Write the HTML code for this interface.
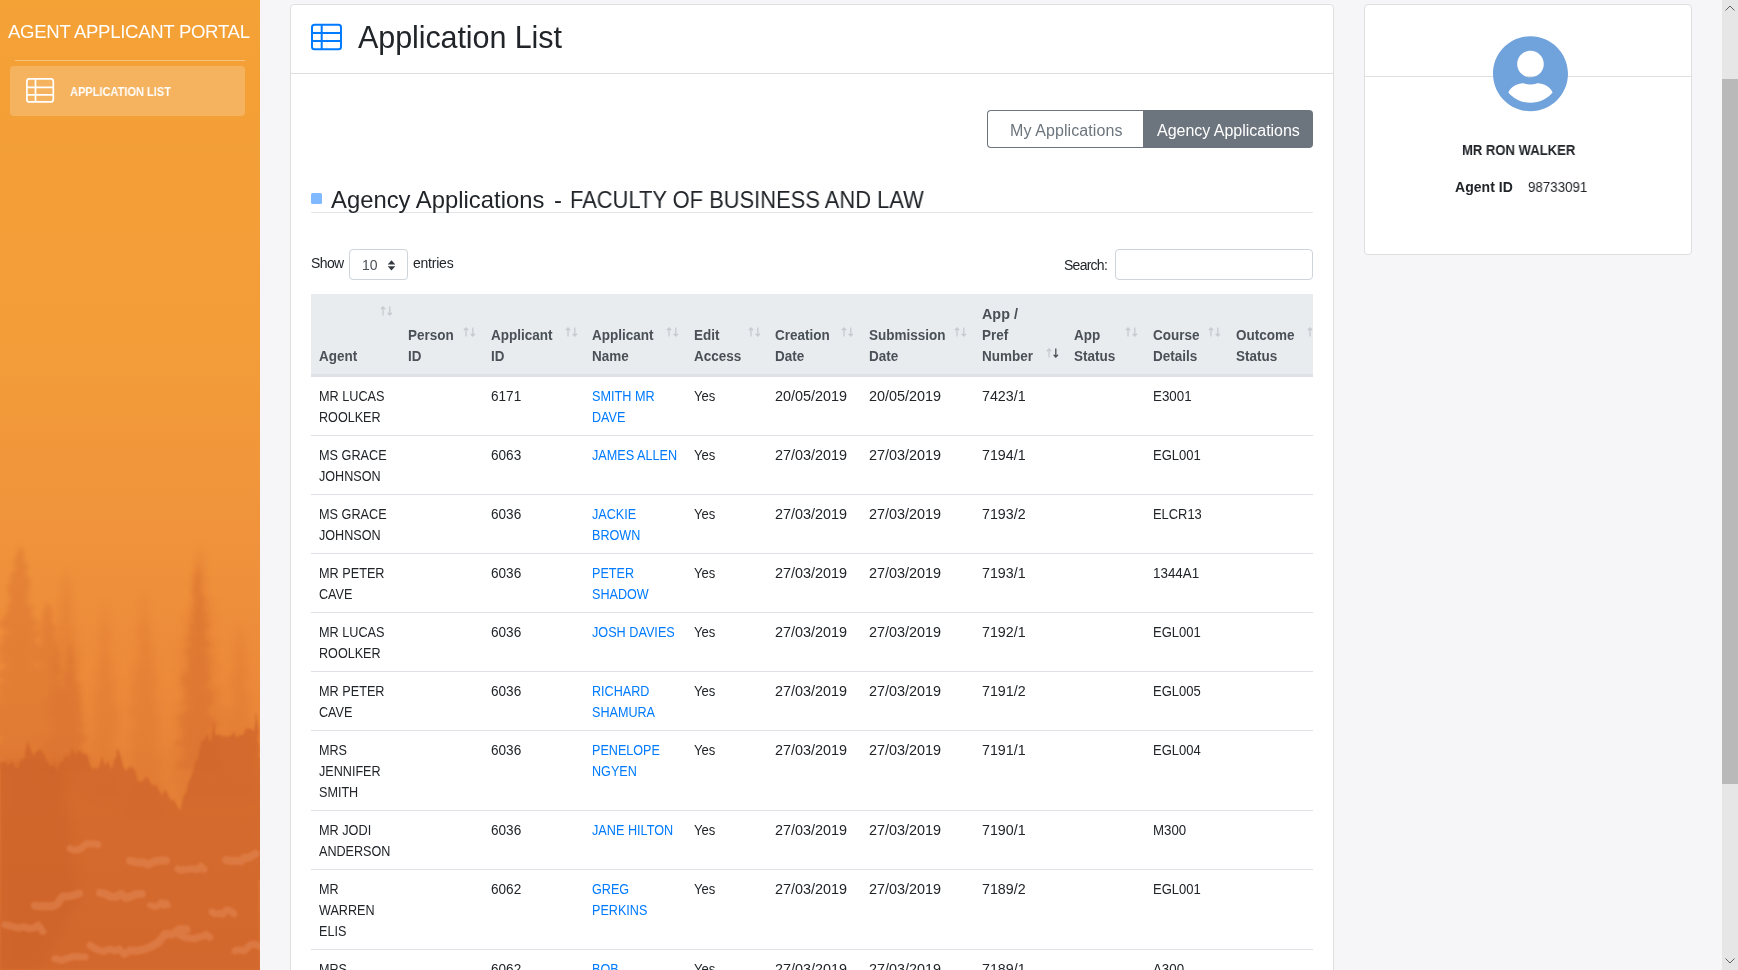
<!DOCTYPE html>
<html><head><meta charset="utf-8">
<style>
html,body{margin:0;padding:0;width:1738px;height:970px;overflow:hidden;background:#f6f6f8;}
body{position:relative;font-family:"Liberation Sans",sans-serif;color:#212529;}
.abs,.x{position:absolute;}
.x{white-space:nowrap;will-change:transform;}
#side{position:absolute;left:0;top:0;width:260px;height:970px;overflow:hidden;}
#side .hr{position:absolute;left:15px;top:60px;width:230px;height:1px;background:rgba(255,255,255,0.35);}
#side .item{position:absolute;left:10px;top:66px;width:235px;height:50px;border-radius:4px;background:rgba(255,255,255,0.2);}
#side .item svg{position:absolute;left:16px;top:12px;}
#card{position:absolute;left:290px;top:4px;width:1042px;height:1000px;background:#fff;border:1px solid #dfdfdf;border-radius:4px;}
#card .hd{position:absolute;left:0;top:0;width:1042px;height:68px;border-bottom:1px solid #dfdfdf;}
.btn1{position:absolute;left:987px;top:110px;width:155px;height:36px;border:1px solid #6c757d;border-right:none;border-radius:4px 0 0 4px;background:#fff;}
.btn2{position:absolute;left:1143px;top:110px;width:170px;height:38px;border-radius:0 4px 4px 0;background:#6c757d;}
.sq{position:absolute;left:311px;top:193px;width:11px;height:11px;background:#80b9ff;border-radius:1.5px;}
.secline{position:absolute;left:311px;top:212px;width:1002px;height:1px;background:#e3e5e8;}
.sel{position:absolute;left:349px;top:249px;width:57px;height:29px;border:1px solid #ced4da;border-radius:4px;background:#fff;}
.inp{position:absolute;left:1115px;top:249px;width:196px;height:29px;border:1px solid #ced4da;border-radius:4px;background:#fff;}
.thbg{position:absolute;left:311px;top:294px;width:1002px;height:80px;background:#e9ecef;}
.thb{position:absolute;left:311px;top:374px;width:1002px;height:3px;background:#dee2e6;}
.rb{position:absolute;left:311px;width:1002px;height:1px;background:#dee2e6;}
#rcard{position:absolute;left:1364px;top:4px;width:326px;height:249px;background:#fff;border:1px solid #dfdfdf;border-radius:4px;}
#rcard .hline{position:absolute;left:0;top:71px;width:326px;height:1px;background:#dfdfdf;}
#sb{position:absolute;left:1722px;top:0;width:16px;height:970px;background:#e6e6e6;}
#sb .thumb{position:absolute;left:0;top:79px;width:16px;height:705px;background:#b9b9b9;}
</style></head>
<body>
<div id="side">
<svg width="260" height="970" viewBox="0 0 260 970" style="position:absolute;left:0;top:0">
<defs><linearGradient id="sg" x1="0" y1="0" x2="0" y2="1"><stop offset="0" stop-color="#f4a136"/><stop offset="0.35" stop-color="#f39d39"/><stop offset="0.55" stop-color="#f0933c"/><stop offset="0.72" stop-color="#eb893a"/><stop offset="0.85" stop-color="#e47f38"/><stop offset="1" stop-color="#dd7636"/></linearGradient><filter id="b4" x="-30%" y="-30%" width="160%" height="160%"><feGaussianBlur stdDeviation="5"/></filter><filter id="b3" x="-30%" y="-30%" width="160%" height="160%"><feGaussianBlur stdDeviation="2.5"/></filter><filter id="b2" x="-30%" y="-30%" width="160%" height="160%"><feGaussianBlur stdDeviation="1.3"/></filter><filter id="b1" x="-30%" y="-30%" width="160%" height="160%"><feGaussianBlur stdDeviation="0.9"/></filter></defs>
<rect width="260" height="970" fill="url(#sg)"/>
<g fill="#d9712f" opacity="0.35" filter="url(#b4)"><path d="M200.0 546.0 L200.0 546.0 L201.1 550.0 L202.1 554.1 L202.7 558.1 L204.4 562.1 L203.3 566.2 L206.1 570.2 L203.0 574.2 L208.6 578.3 L207.3 582.3 L203.8 586.3 L204.4 590.3 L206.2 594.4 L208.5 598.4 L212.4 602.4 L211.2 606.5 L212.0 610.5 L208.5 614.5 L216.8 618.6 L214.3 622.6 L209.1 626.6 L207.5 630.7 L212.1 634.7 L212.3 638.7 L219.1 642.8 L210.6 646.8 L214.8 650.8 L214.2 654.9 L218.2 658.9 L213.0 662.9 L214.3 667.0 L222.0 671.0 L213.6 675.0 L210.6 679.0 L213.0 683.1 L218.4 687.1 L224.3 691.1 L223.1 695.2 L219.1 699.2 L216.4 703.2 L227.9 707.3 L230.2 711.3 L220.1 715.3 L226.0 719.4 L234.3 723.4 L218.1 727.4 L220.1 731.5 L214.4 735.5 L226.9 739.5 L227.8 743.6 L224.6 747.6 L225.8 751.6 L236.0 755.7 L218.0 759.7 L235.8 763.7 L219.5 767.7 L240.2 771.8 L241.1 775.8 L231.9 779.8 L218.1 783.9 L243.2 787.9 L236.2 791.9 L240.2 796.0 L224.8 800.0 L200.0 800.0 L166.1 800.0 L176.6 796.0 L177.4 791.9 L183.5 787.9 L172.8 783.9 L160.3 779.8 L179.8 775.8 L165.3 771.8 L178.9 767.7 L161.8 763.7 L181.3 759.7 L171.5 755.7 L162.2 751.6 L177.4 747.6 L181.0 743.6 L185.0 739.5 L180.3 735.5 L169.5 731.5 L182.9 727.4 L185.7 723.4 L169.3 719.4 L183.9 715.3 L182.2 711.3 L168.6 707.3 L184.7 703.2 L187.0 699.2 L187.0 695.2 L186.1 691.1 L179.5 687.1 L175.6 683.1 L188.7 679.0 L188.6 675.0 L174.5 671.0 L189.7 667.0 L178.8 662.9 L190.5 658.9 L176.9 654.9 L178.7 650.8 L192.4 646.8 L179.3 642.8 L181.5 638.7 L183.2 634.7 L189.8 630.7 L189.8 626.6 L184.2 622.6 L183.1 618.6 L189.6 614.5 L189.6 610.5 L190.0 606.5 L191.2 602.4 L195.2 598.4 L194.2 594.4 L192.1 590.3 L195.2 586.3 L192.5 582.3 L191.3 578.3 L193.7 574.2 L197.1 570.2 L197.5 566.2 L196.2 562.1 L198.1 558.1 L198.0 554.1 L198.4 550.0 L200.0 546.0Z"/><path d="M144.0 590.0 L144.0 590.0 L144.6 594.0 L145.9 598.1 L145.5 602.1 L145.7 606.1 L146.2 610.2 L145.9 614.2 L147.3 618.2 L146.7 622.3 L150.3 626.3 L149.8 630.4 L149.8 634.4 L147.2 638.4 L152.6 642.5 L153.5 646.5 L151.8 650.5 L152.9 654.6 L155.4 658.6 L152.4 662.6 L155.6 666.7 L154.4 670.7 L156.7 674.7 L155.1 678.8 L157.3 682.8 L156.9 686.8 L155.2 690.9 L153.5 694.9 L156.3 698.9 L156.9 703.0 L160.0 707.0 L154.8 711.1 L157.3 715.1 L160.9 719.1 L160.2 723.2 L158.6 727.2 L154.1 731.2 L157.9 735.3 L164.1 739.3 L151.7 743.3 L161.4 747.4 L154.3 751.4 L161.9 755.4 L165.8 759.5 L162.7 763.5 L159.3 767.5 L167.4 771.6 L159.1 775.6 L158.2 779.6 L161.5 783.7 L167.9 787.7 L170.0 791.8 L156.5 795.8 L158.6 799.8 L161.4 803.9 L163.2 807.9 L170.0 811.9 L163.0 816.0 L155.0 820.0 L144.0 820.0 L132.1 820.0 L114.9 816.0 L127.9 811.9 L122.4 807.9 L130.2 803.9 L126.2 799.8 L129.5 795.8 L122.1 791.8 L120.3 787.7 L132.6 783.7 L125.3 779.6 L120.8 775.6 L122.4 771.6 L132.4 767.5 L130.6 763.5 L129.1 759.5 L122.4 755.4 L133.2 751.4 L132.0 747.4 L132.9 743.3 L128.2 739.3 L127.4 735.3 L130.6 731.2 L136.7 727.2 L136.2 723.2 L132.0 719.1 L128.8 715.1 L129.3 711.1 L126.7 707.0 L137.2 703.0 L132.0 698.9 L131.9 694.9 L129.9 690.9 L134.7 686.8 L130.5 682.8 L135.9 678.8 L132.4 674.7 L133.3 670.7 L133.7 666.7 L139.3 662.6 L137.7 658.6 L136.8 654.6 L140.3 650.5 L136.2 646.5 L140.7 642.5 L140.2 638.4 L137.6 634.4 L136.7 630.4 L140.0 626.3 L139.5 622.3 L141.4 618.2 L140.8 614.2 L142.5 610.2 L140.6 606.1 L141.9 602.1 L142.5 598.1 L143.5 594.0 L144.0 590.0Z"/><path d="M105.0 600.0 L105.0 600.0 L105.7 604.0 L106.5 608.0 L106.1 612.0 L106.1 616.0 L106.8 620.0 L106.6 624.0 L108.0 628.0 L109.1 632.0 L110.7 636.0 L108.0 640.0 L108.2 644.0 L109.8 648.0 L108.6 652.0 L109.8 656.0 L111.0 660.0 L112.8 664.0 L113.4 668.0 L109.1 672.0 L113.7 676.0 L112.1 680.0 L115.8 684.0 L113.6 688.0 L115.7 692.0 L113.3 696.0 L111.4 700.0 L117.0 704.0 L116.5 708.0 L118.5 712.0 L119.7 716.0 L118.2 720.0 L119.8 724.0 L114.3 728.0 L115.5 732.0 L119.3 736.0 L111.3 740.0 L111.9 744.0 L113.3 748.0 L120.9 752.0 L113.4 756.0 L120.8 760.0 L120.6 764.0 L118.4 768.0 L113.2 772.0 L119.4 776.0 L122.4 780.0 L119.8 784.0 L120.6 788.0 L118.3 792.0 L126.2 796.0 L125.8 800.0 L105.0 800.0 L93.9 800.0 L84.7 796.0 L92.7 792.0 L85.3 788.0 L88.6 784.0 L93.6 780.0 L94.8 776.0 L85.3 772.0 L85.7 768.0 L87.4 764.0 L91.8 760.0 L96.7 756.0 L94.5 752.0 L89.3 748.0 L89.5 744.0 L93.5 740.0 L93.1 736.0 L98.4 732.0 L90.4 728.0 L96.3 724.0 L94.3 720.0 L90.3 716.0 L98.0 712.0 L94.2 708.0 L93.8 704.0 L94.8 700.0 L92.7 696.0 L93.6 692.0 L97.9 688.0 L96.3 684.0 L100.2 680.0 L94.9 676.0 L95.5 672.0 L99.1 668.0 L98.1 664.0 L98.0 660.0 L100.6 656.0 L98.6 652.0 L102.4 648.0 L100.5 644.0 L100.0 640.0 L99.9 636.0 L101.0 632.0 L101.4 628.0 L103.1 624.0 L101.8 620.0 L103.0 616.0 L104.1 612.0 L104.0 608.0 L104.2 604.0 L105.0 600.0Z"/><path d="M240.0 620.0 L240.0 620.0 L240.6 624.0 L241.5 628.0 L241.2 632.0 L242.7 636.0 L244.1 640.0 L243.7 644.0 L242.4 648.0 L244.3 652.0 L247.2 656.0 L245.4 660.0 L245.6 664.0 L249.0 668.0 L245.7 672.0 L248.1 676.0 L245.0 680.0 L244.4 684.0 L246.3 688.0 L247.4 692.0 L250.4 696.0 L251.9 700.0 L250.2 704.0 L247.4 708.0 L250.2 712.0 L250.3 716.0 L247.8 720.0 L253.5 724.0 L252.7 728.0 L254.1 732.0 L249.7 736.0 L257.5 740.0 L251.3 744.0 L260.0 748.0 L261.5 752.0 L249.6 756.0 L258.5 760.0 L249.5 764.0 L254.7 768.0 L250.4 772.0 L259.6 776.0 L252.0 780.0 L264.1 784.0 L251.1 788.0 L262.4 792.0 L261.6 796.0 L250.9 800.0 L240.0 800.0 L227.0 800.0 L221.7 796.0 L222.0 792.0 L214.4 788.0 L219.7 784.0 L231.0 780.0 L225.0 776.0 L219.2 772.0 L219.0 768.0 L228.1 764.0 L228.6 760.0 L219.6 756.0 L229.4 752.0 L228.4 748.0 L220.8 744.0 L223.4 740.0 L222.4 736.0 L222.9 732.0 L226.0 728.0 L231.4 724.0 L228.0 720.0 L230.1 716.0 L228.8 712.0 L232.0 708.0 L233.6 704.0 L234.0 700.0 L232.0 696.0 L229.4 692.0 L234.0 688.0 L229.7 684.0 L229.1 680.0 L234.9 676.0 L233.3 672.0 L231.6 668.0 L236.1 664.0 L235.7 660.0 L232.6 656.0 L235.2 652.0 L235.0 648.0 L236.1 644.0 L237.1 640.0 L236.1 636.0 L237.7 632.0 L238.4 628.0 L239.1 624.0 L240.0 620.0Z"/><path d="M66.0 566.0 L66.0 566.0 L66.9 570.0 L67.0 574.0 L67.5 578.0 L69.9 582.0 L67.9 586.0 L71.2 590.0 L71.2 594.0 L70.4 598.0 L70.7 602.0 L68.9 606.0 L73.9 610.0 L72.0 614.0 L72.1 618.0 L70.8 622.0 L70.0 626.0 L76.3 630.0 L77.3 634.0 L73.9 638.0 L75.2 642.0 L78.3 646.0 L79.8 650.0 L79.0 654.0 L75.7 658.0 L81.1 662.0 L80.3 666.0 L76.7 670.0 L73.1 674.0 L78.1 678.0 L77.0 682.0 L80.8 686.0 L85.3 690.0 L77.7 694.0 L81.2 698.0 L79.0 702.0 L83.0 706.0 L85.1 710.0 L74.4 714.0 L85.6 718.0 L80.7 722.0 L77.7 726.0 L76.3 730.0 L90.0 734.0 L83.7 738.0 L85.1 742.0 L86.7 746.0 L76.9 750.0 L89.6 754.0 L93.2 758.0 L85.0 762.0 L85.7 766.0 L77.5 770.0 L84.9 774.0 L88.7 778.0 L82.7 782.0 L88.6 786.0 L92.2 790.0 L66.0 790.0 L48.8 790.0 L41.4 786.0 L47.7 782.0 L44.7 778.0 L36.7 774.0 L43.7 770.0 L52.5 766.0 L52.9 762.0 L55.3 758.0 L45.4 754.0 L41.9 750.0 L39.1 746.0 L40.0 742.0 L47.6 738.0 L52.9 734.0 L51.1 730.0 L56.6 726.0 L53.6 722.0 L48.3 718.0 L43.2 714.0 L47.8 710.0 L43.9 706.0 L51.0 702.0 L49.6 698.0 L49.9 694.0 L56.0 690.0 L51.1 686.0 L59.3 682.0 L55.4 678.0 L51.3 674.0 L51.2 670.0 L52.5 666.0 L50.8 662.0 L52.1 658.0 L53.3 654.0 L58.4 650.0 L52.0 646.0 L56.0 642.0 L56.2 638.0 L56.0 634.0 L55.0 630.0 L58.3 626.0 L61.0 622.0 L57.7 618.0 L61.6 614.0 L58.9 610.0 L60.0 606.0 L60.9 602.0 L62.2 598.0 L62.0 594.0 L63.9 590.0 L61.6 586.0 L62.5 582.0 L64.5 578.0 L64.4 574.0 L65.1 570.0 L66.0 566.0Z"/></g>
<g fill="#d66d2d" opacity="0.42" filter="url(#b3)"><path d="M20.0 543.0 L20.0 543.0 L20.8 547.1 L23.0 551.1 L24.5 555.2 L22.3 559.2 L27.1 563.3 L28.0 567.3 L26.3 571.4 L25.4 575.4 L31.2 579.5 L28.3 583.5 L32.1 587.6 L26.2 591.6 L30.1 595.7 L26.4 599.8 L27.6 603.8 L34.6 607.9 L30.1 611.9 L32.7 616.0 L34.8 620.0 L41.5 624.1 L31.6 628.1 L42.3 632.2 L38.8 636.2 L33.5 640.3 L39.0 644.3 L40.8 648.4 L33.3 652.4 L48.7 656.5 L47.5 660.6 L31.9 664.6 L39.7 668.7 L33.4 672.7 L33.1 676.8 L46.8 680.8 L46.4 684.9 L43.4 688.9 L40.8 693.0 L53.2 697.0 L36.1 701.1 L49.2 705.1 L39.2 709.2 L40.7 713.2 L44.1 717.3 L61.4 721.4 L50.0 725.4 L61.0 729.5 L45.9 733.5 L61.1 737.6 L38.3 741.6 L50.7 745.7 L45.5 749.7 L39.0 753.8 L57.7 757.8 L46.8 761.9 L59.9 765.9 L42.3 770.0 L20.0 770.0 L-6.9 770.0 L-20.9 765.9 L0.3 761.9 L-3.6 757.8 L-20.7 753.8 L-17.3 749.7 L-13.1 745.7 L1.9 741.6 L1.6 737.6 L-7.6 733.5 L-16.1 729.5 L-3.8 725.4 L-12.3 721.4 L-15.9 717.3 L-5.1 713.2 L-13.5 709.2 L-13.8 705.1 L5.0 701.1 L-10.9 697.0 L2.4 693.0 L-1.0 688.9 L-4.6 684.9 L6.3 680.8 L-3.2 676.8 L-4.4 672.7 L3.5 668.7 L8.5 664.6 L-8.2 660.6 L5.2 656.5 L-3.7 652.4 L-0.1 648.4 L-1.1 644.3 L5.0 640.3 L-1.3 636.2 L9.9 632.2 L0.9 628.1 L-2.2 624.1 L1.8 620.0 L5.2 616.0 L7.4 611.9 L8.2 607.9 L7.8 603.8 L12.0 599.8 L8.1 595.7 L9.1 591.6 L6.4 587.6 L9.6 583.5 L11.9 579.5 L9.5 575.4 L14.0 571.4 L16.6 567.3 L12.7 563.3 L14.9 559.2 L17.1 555.2 L18.4 551.1 L19.0 547.1 L20.0 543.0Z"/><path d="M48.0 600.0 L48.0 600.0 L48.8 604.0 L50.5 608.1 L52.5 612.1 L51.8 616.2 L51.9 620.2 L53.0 624.3 L56.7 628.3 L54.1 632.4 L54.7 636.4 L55.5 640.5 L57.6 644.5 L58.1 648.6 L58.9 652.6 L61.7 656.7 L57.1 660.7 L60.4 664.8 L61.6 668.8 L63.3 672.9 L56.1 676.9 L66.6 681.0 L57.0 685.0 L69.8 689.0 L66.4 693.1 L68.8 697.1 L61.1 701.2 L70.6 705.2 L71.2 709.3 L64.1 713.3 L70.9 717.4 L68.9 721.4 L72.8 725.5 L67.4 729.5 L73.2 733.6 L76.8 737.6 L79.3 741.7 L74.5 745.7 L76.6 749.8 L70.5 753.8 L64.3 757.9 L85.4 761.9 L65.5 766.0 L72.4 770.0 L48.0 770.0 L29.2 770.0 L25.3 766.0 L16.7 761.9 L25.1 757.9 L16.6 753.8 L23.6 749.8 L14.4 745.7 L17.9 741.7 L18.1 737.6 L19.4 733.6 L18.3 729.5 L22.9 725.5 L28.0 721.4 L19.5 717.4 L30.9 713.3 L29.1 709.3 L34.9 705.2 L28.1 701.2 L37.0 697.1 L38.3 693.1 L28.7 689.0 L39.0 685.0 L32.8 681.0 L29.9 676.9 L28.6 672.9 L34.7 668.8 L41.5 664.8 L32.2 660.7 L40.5 656.7 L34.3 652.6 L35.5 648.6 L41.6 644.5 L40.5 640.5 L41.3 636.4 L42.7 632.4 L39.1 628.3 L43.4 624.3 L41.8 620.2 L42.4 616.2 L43.5 612.1 L45.2 608.1 L46.8 604.0 L48.0 600.0Z"/><path d="M70.0 640.0 L70.0 640.0 L70.9 644.1 L72.1 648.1 L71.8 652.2 L73.1 656.2 L75.4 660.3 L72.8 664.4 L73.7 668.4 L76.8 672.5 L74.5 676.6 L75.3 680.6 L79.1 684.7 L78.1 688.8 L78.1 692.8 L82.1 696.9 L77.9 700.9 L84.1 705.0 L77.5 709.1 L85.4 713.1 L80.0 717.2 L81.9 721.2 L87.9 725.3 L79.4 729.4 L82.7 733.4 L87.4 737.5 L85.4 741.6 L79.6 745.6 L81.4 749.7 L85.6 753.8 L93.3 757.8 L86.7 761.9 L91.0 765.9 L92.4 770.0 L70.0 770.0 L61.2 770.0 L59.0 765.9 L57.5 761.9 L52.2 757.8 L49.2 753.8 L57.7 749.7 L60.3 745.6 L53.1 741.6 L58.1 737.5 L63.1 733.4 L55.4 729.4 L60.5 725.3 L58.0 721.2 L55.5 717.2 L63.9 713.1 L59.9 709.1 L59.8 705.0 L57.0 700.9 L63.2 696.9 L59.2 692.8 L63.6 688.8 L65.0 684.7 L65.3 680.6 L63.3 676.6 L65.8 672.5 L66.5 668.4 L67.5 664.4 L65.8 660.3 L68.1 656.2 L66.7 652.2 L68.8 648.1 L69.4 644.1 L70.0 640.0Z"/><path d="M198.0 560.0 L198.0 560.0 L198.7 564.0 L198.9 568.1 L200.0 572.1 L200.8 576.2 L200.5 580.2 L201.3 584.2 L200.4 588.3 L201.2 592.3 L203.1 596.3 L205.1 600.4 L202.8 604.4 L203.1 608.5 L206.0 612.5 L206.3 616.5 L204.7 620.6 L209.4 624.6 L207.5 628.7 L205.6 632.7 L204.7 636.7 L207.0 640.8 L212.4 644.8 L205.3 648.8 L206.4 652.9 L209.3 656.9 L207.5 661.0 L211.4 665.0 L206.5 669.0 L208.3 673.1 L211.4 677.1 L208.9 681.2 L206.1 685.2 L206.3 689.2 L214.8 693.3 L211.0 697.3 L214.0 701.3 L209.0 705.4 L207.8 709.4 L207.2 713.5 L212.9 717.5 L216.7 721.5 L219.8 725.6 L212.2 729.6 L207.2 733.7 L219.0 737.7 L221.0 741.7 L218.2 745.8 L213.5 749.8 L219.7 753.8 L214.9 757.9 L223.0 761.9 L220.0 766.0 L223.3 770.0 L198.0 770.0 L184.5 770.0 L171.9 766.0 L178.3 761.9 L186.1 757.9 L182.0 753.8 L188.1 749.8 L176.9 745.8 L171.7 741.7 L182.1 737.7 L182.2 733.7 L182.9 729.6 L177.0 725.6 L181.5 721.5 L175.5 717.5 L183.7 713.5 L187.7 709.4 L188.9 705.4 L178.5 701.3 L188.1 697.3 L181.6 693.3 L189.1 689.2 L180.5 685.2 L182.2 681.2 L179.9 677.1 L183.0 673.1 L188.9 669.0 L187.6 665.0 L189.0 661.0 L188.4 656.9 L186.3 652.9 L184.9 648.8 L192.9 644.8 L188.0 640.8 L187.2 636.7 L193.4 632.7 L187.1 628.7 L190.4 624.6 L193.4 620.6 L191.9 616.5 L191.6 612.5 L194.3 608.5 L193.2 604.4 L194.4 600.4 L192.8 596.3 L192.1 592.3 L192.3 588.3 L193.4 584.2 L193.8 580.2 L194.3 576.2 L196.0 572.1 L196.2 568.1 L197.5 564.0 L198.0 560.0Z"/></g>
<g fill="#cf6429" opacity="0.72" filter="url(#b2)"><path d="M0.0 970.0 L0.0 762.8 L3.0 761.9 L6.0 762.3 L9.0 765.7 L12.0 761.6 L15.0 767.3 L18.0 768.2 L21.0 759.3 L24.0 758.3 L27.0 756.8 L30.0 747.1 L33.0 755.3 L36.0 752.3 L39.0 749.1 L42.0 750.8 L45.0 756.1 L48.0 763.3 L51.0 767.1 L54.0 763.9 L57.0 770.8 L60.0 762.4 L63.0 760.9 L66.0 753.5 L69.0 760.3 L72.0 747.6 L75.0 755.2 L78.0 750.6 L81.0 752.0 L84.0 754.4 L87.0 754.1 L90.0 765.2 L93.0 769.2 L96.0 769.1 L99.0 767.2 L102.0 756.3 L105.0 765.9 L108.0 760.7 L111.0 769.2 L114.0 762.5 L117.0 767.7 L120.0 772.0 L123.0 765.4 L126.0 771.0 L129.0 766.5 L132.0 767.2 L135.0 770.2 L138.0 781.0 L141.0 781.7 L144.0 779.5 L147.0 776.5 L150.0 782.1 L153.0 785.9 L156.0 784.6 L159.0 790.1 L162.0 795.6 L165.0 789.2 L168.0 794.4 L171.0 800.6 L174.0 799.7 L177.0 805.6 L180.0 810.8 L183.0 797.1 L186.0 792.2 L189.0 780.2 L192.0 774.8 L195.0 763.0 L198.0 757.7 L201.0 741.5 L204.0 740.1 L207.0 733.3 L210.0 742.5 L213.0 737.6 L216.0 735.4 L219.0 734.1 L222.0 736.1 L225.0 736.3 L228.0 736.5 L231.0 735.8 L234.0 732.0 L237.0 737.5 L240.0 735.1 L243.0 734.7 L246.0 728.7 L249.0 728.4 L252.0 729.4 L255.0 732.9 L258.0 727.7 L260.0 970.0 Z"/><path d="M118.0 748.0 L118.0 748.0 L119.1 752.0 L120.7 756.0 L121.8 760.0 L122.9 764.0 L123.1 768.0 L121.5 772.0 L124.2 776.0 L121.9 780.0 L125.7 784.0 L124.6 788.0 L124.6 792.0 L131.2 796.0 L129.7 800.0 L127.9 804.0 L126.2 808.0 L130.7 812.0 L125.6 816.0 L126.3 820.0 L137.6 824.0 L128.7 828.0 L130.3 832.0 L139.2 836.0 L132.3 840.0 L135.8 844.0 L127.3 848.0 L132.3 852.0 L143.7 856.0 L136.1 860.0 L118.0 860.0 L90.8 860.0 L100.0 856.0 L93.7 852.0 L108.5 848.0 L103.8 844.0 L97.3 840.0 L109.2 836.0 L106.1 832.0 L110.7 828.0 L103.9 824.0 L101.2 820.0 L100.7 816.0 L103.3 812.0 L103.4 808.0 L103.5 804.0 L103.4 800.0 L112.5 796.0 L110.1 792.0 L111.9 788.0 L109.1 784.0 L111.9 780.0 L112.2 776.0 L114.8 772.0 L114.2 768.0 L113.7 764.0 L113.7 760.0 L116.7 756.0 L116.2 752.0 L118.0 748.0Z"/><path d="M150.0 785.0 L150.0 785.0 L151.4 789.1 L152.3 793.3 L152.4 797.4 L154.2 801.5 L152.6 805.7 L153.0 809.8 L152.7 813.9 L156.5 818.0 L158.1 822.2 L157.7 826.3 L158.2 830.4 L157.0 834.6 L155.8 838.7 L160.0 842.8 L156.1 847.0 L160.8 851.1 L158.5 855.2 L164.0 859.3 L157.9 863.5 L165.7 867.6 L159.0 871.7 L157.2 875.9 L161.7 880.0 L150.0 880.0 L131.8 880.0 L136.4 875.9 L136.6 871.7 L141.0 867.6 L138.4 863.5 L138.2 859.3 L137.5 855.2 L143.1 851.1 L143.8 847.0 L143.2 842.8 L145.3 838.7 L139.5 834.6 L145.6 830.4 L141.4 826.3 L145.2 822.2 L146.7 818.0 L143.5 813.9 L145.2 809.8 L144.6 805.7 L147.9 801.5 L147.9 797.4 L148.8 793.3 L148.6 789.1 L150.0 785.0Z"/><path d="M214.0 722.0 L214.0 722.0 L214.9 726.1 L215.1 730.1 L215.2 734.2 L217.1 738.2 L216.4 742.3 L216.4 746.3 L219.8 750.4 L218.2 754.4 L218.3 758.5 L219.2 762.5 L219.9 766.6 L219.2 770.6 L222.2 774.7 L220.9 778.7 L222.5 782.8 L224.9 786.8 L224.1 790.9 L223.2 794.9 L222.2 799.0 L225.6 803.0 L221.0 807.1 L221.2 811.1 L224.1 815.2 L225.5 819.2 L225.6 823.3 L221.7 827.3 L220.2 831.4 L225.1 835.4 L223.4 839.5 L221.4 843.5 L227.8 847.6 L231.0 851.6 L222.9 855.7 L221.7 859.7 L229.9 863.8 L225.2 867.8 L222.9 871.9 L224.4 875.9 L224.4 880.0 L214.0 880.0 L202.2 880.0 L194.1 875.9 L197.9 871.9 L199.1 867.8 L202.3 863.8 L202.7 859.7 L203.9 855.7 L200.2 851.6 L196.0 847.6 L197.8 843.5 L202.5 839.5 L202.2 835.4 L206.3 831.4 L198.8 827.3 L200.9 823.3 L208.2 819.2 L203.1 815.2 L204.3 811.1 L201.9 807.1 L202.5 803.0 L207.5 799.0 L208.4 794.9 L208.5 790.9 L206.2 786.8 L204.4 782.8 L207.1 778.7 L206.6 774.7 L207.1 770.6 L210.1 766.6 L206.6 762.5 L208.0 758.5 L211.6 754.4 L208.6 750.4 L210.4 746.3 L211.7 742.3 L212.0 738.2 L211.4 734.2 L212.9 730.1 L213.5 726.1 L214.0 722.0Z"/><path d="M238.0 738.0 L238.0 738.0 L238.5 742.1 L239.4 746.1 L241.2 750.2 L240.7 754.2 L242.8 758.3 L241.6 762.3 L240.4 766.4 L244.6 770.5 L242.7 774.5 L243.3 778.6 L241.4 782.6 L246.3 786.7 L243.2 790.7 L245.8 794.8 L245.6 798.9 L245.2 802.9 L250.7 807.0 L243.0 811.0 L248.9 815.1 L246.4 819.1 L251.9 823.2 L252.7 827.3 L247.9 831.3 L248.1 835.4 L246.6 839.4 L246.5 843.5 L246.5 847.5 L247.4 851.6 L248.9 855.7 L258.2 859.7 L257.0 863.8 L250.8 867.8 L255.5 871.9 L249.8 875.9 L248.7 880.0 L238.0 880.0 L229.7 880.0 L224.9 875.9 L229.3 871.9 L227.7 867.8 L221.5 863.8 L225.0 859.7 L225.1 855.7 L228.8 851.6 L224.8 847.5 L227.6 843.5 L222.9 839.4 L222.7 835.4 L227.3 831.3 L226.4 827.3 L225.8 823.2 L232.3 819.1 L229.4 815.1 L227.9 811.0 L230.7 807.0 L226.2 802.9 L232.1 798.9 L232.3 794.8 L229.4 790.7 L228.3 786.7 L234.4 782.6 L233.4 778.6 L234.6 774.5 L234.4 770.5 L232.7 766.4 L235.5 762.3 L233.9 758.3 L236.5 754.2 L236.4 750.2 L236.6 746.1 L236.8 742.1 L238.0 738.0Z"/><path d="M256.0 712.0 L256.0 712.0 L256.8 716.0 L256.9 720.0 L258.1 724.0 L258.4 728.0 L259.1 732.0 L258.2 736.0 L257.8 740.0 L258.7 744.0 L259.7 748.0 L259.5 752.0 L258.4 756.0 L261.0 760.0 L260.0 764.0 L261.4 768.0 L262.5 772.0 L263.0 776.0 L260.0 780.0 L261.0 784.0 L262.0 788.0 L265.3 792.0 L261.7 796.0 L261.4 800.0 L260.1 804.0 L264.4 808.0 L268.0 812.0 L265.8 816.0 L262.3 820.0 L266.4 824.0 L268.5 828.0 L266.7 832.0 L265.0 836.0 L261.7 840.0 L264.5 844.0 L264.2 848.0 L265.7 852.0 L263.4 856.0 L264.4 860.0 L265.7 864.0 L263.7 868.0 L270.2 872.0 L270.5 876.0 L267.1 880.0 L256.0 880.0 L249.3 880.0 L243.2 876.0 L243.1 872.0 L245.2 868.0 L249.1 864.0 L243.0 860.0 L245.3 856.0 L248.8 852.0 L245.6 848.0 L246.9 844.0 L247.1 840.0 L250.1 836.0 L249.0 832.0 L242.7 828.0 L245.4 824.0 L243.8 820.0 L249.2 816.0 L245.4 812.0 L247.1 808.0 L251.7 804.0 L249.7 800.0 L250.8 796.0 L249.9 792.0 L248.1 788.0 L251.5 784.0 L249.0 780.0 L251.6 776.0 L252.5 772.0 L251.2 768.0 L253.3 764.0 L253.0 760.0 L252.8 756.0 L253.8 752.0 L251.4 748.0 L251.5 744.0 L253.4 740.0 L254.6 736.0 L253.3 732.0 L254.4 728.0 L255.0 724.0 L255.2 720.0 L255.1 716.0 L256.0 712.0Z"/><path d="M28.0 740.0 L28.0 740.0 L28.7 744.0 L30.3 748.0 L30.5 752.0 L30.0 756.0 L34.1 760.0 L31.9 764.0 L32.0 768.0 L35.2 772.0 L34.2 776.0 L39.0 780.0 L37.4 784.0 L36.2 788.0 L35.5 792.0 L41.8 796.0 L42.9 800.0 L35.3 804.0 L37.6 808.0 L46.1 812.0 L37.1 816.0 L43.8 820.0 L35.2 824.0 L41.0 828.0 L42.9 832.0 L44.3 836.0 L45.0 840.0 L52.1 844.0 L42.6 848.0 L42.4 852.0 L49.5 856.0 L55.0 860.0 L28.0 860.0 L6.0 860.0 L6.1 856.0 L3.8 852.0 L13.7 848.0 L6.1 844.0 L10.0 840.0 L10.2 836.0 L16.8 832.0 L12.9 828.0 L17.6 824.0 L18.1 820.0 L19.5 816.0 L17.3 812.0 L16.1 808.0 L21.8 804.0 L18.5 800.0 L14.7 796.0 L19.3 792.0 L18.0 788.0 L17.5 784.0 L19.7 780.0 L17.8 776.0 L21.7 772.0 L21.2 768.0 L22.5 764.0 L24.2 760.0 L25.2 756.0 L25.1 752.0 L25.9 748.0 L26.9 744.0 L28.0 740.0Z"/><path d="M70.0 752.0 L70.0 752.0 L71.1 756.0 L71.7 760.0 L73.3 764.0 L72.5 768.0 L73.3 772.0 L74.7 776.0 L73.0 780.0 L73.6 784.0 L74.0 788.0 L78.8 792.0 L75.1 796.0 L81.0 800.0 L76.6 804.0 L81.8 808.0 L81.7 812.0 L82.3 816.0 L79.0 820.0 L84.9 824.0 L82.5 828.0 L84.6 832.0 L86.7 836.0 L78.4 840.0 L85.9 844.0 L79.8 848.0 L85.8 852.0 L91.9 856.0 L88.3 860.0 L70.0 860.0 L60.0 860.0 L48.5 856.0 L62.3 852.0 L59.6 848.0 L58.0 844.0 L53.0 840.0 L55.8 836.0 L58.7 832.0 L54.6 828.0 L56.0 824.0 L61.1 820.0 L62.3 816.0 L61.3 812.0 L60.8 808.0 L65.1 804.0 L59.0 800.0 L62.6 796.0 L63.3 792.0 L62.3 788.0 L66.6 784.0 L66.6 780.0 L66.8 776.0 L67.0 772.0 L66.5 768.0 L67.9 764.0 L67.9 760.0 L68.8 756.0 L70.0 752.0Z"/><path d="M176.0 805.0 L176.0 805.0 L177.3 809.2 L176.9 813.3 L177.4 817.5 L178.2 821.7 L180.9 825.8 L179.2 830.0 L180.5 834.2 L180.3 838.3 L182.9 842.5 L180.6 846.7 L183.0 850.8 L185.9 855.0 L184.5 859.2 L185.8 863.3 L181.5 867.5 L188.0 871.7 L184.8 875.8 L183.7 880.0 L176.0 880.0 L170.1 880.0 L169.3 875.8 L170.8 871.7 L170.7 867.5 L168.1 863.3 L169.6 859.2 L167.5 855.0 L170.4 850.8 L168.3 846.7 L171.6 842.5 L171.2 838.3 L173.6 834.2 L173.6 830.0 L171.9 825.8 L174.4 821.7 L173.3 817.5 L173.6 813.3 L175.2 809.2 L176.0 805.0Z"/><path d="M95.0 765.0 L95.0 765.0 L96.0 769.1 L96.1 773.3 L96.9 777.4 L96.5 781.5 L99.4 785.7 L97.2 789.8 L99.1 793.9 L98.3 798.0 L100.0 802.2 L102.2 806.3 L98.4 810.4 L102.4 814.6 L100.4 818.7 L104.9 822.8 L102.3 827.0 L104.9 831.1 L99.6 835.2 L100.6 839.3 L103.0 843.5 L102.9 847.6 L100.3 851.7 L110.1 855.9 L106.1 860.0 L95.0 860.0 L89.3 860.0 L87.5 855.9 L84.8 851.7 L82.9 847.6 L89.5 843.5 L88.9 839.3 L89.2 835.2 L84.3 831.1 L83.6 827.0 L84.6 822.8 L87.3 818.7 L88.2 814.6 L89.6 810.4 L89.9 806.3 L88.1 802.2 L88.1 798.0 L92.1 793.9 L92.0 789.8 L93.1 785.7 L92.9 781.5 L92.9 777.4 L93.8 773.3 L94.4 769.1 L95.0 765.0Z"/></g>
<path d="M0 760 L60 760 L80 900 L40 970 L0 970Z" fill="#c95f27" opacity="0.35" filter="url(#b4)"/>
<g stroke="#e58a58" fill="none" opacity="0.5" stroke-linecap="round" stroke-linejoin="round" filter="url(#b2)"><path d="M70.0 848.5 L73.5 850.1 L77.0 850.1 L80.4 848.8 L83.9 845.7 L87.4 843.5 L90.9 843.9 L94.4 843.8 L97.9 844.5" stroke-width="7"/><path d="M130.0 860.8 L134.5 861.8 L139.0 862.7 L143.5 862.2 L148.0 864.6 L152.5 862.2 L157.0 860.8 L161.5 860.3 L166.0 860.5" stroke-width="8"/><path d="M178.0 868.9 L181.2 870.4 L184.5 869.5 L187.8 869.3 L191.0 869.0 L194.2 868.8 L197.5 869.8 L200.8 865.9 L204.0 869.3" stroke-width="7"/><path d="M226.0 860.0 L229.7 860.7 L233.4 860.7 L237.1 860.8 L240.8 861.3 L244.5 857.7 L248.2 857.8 L252.0 855.9 L255.7 853.6" stroke-width="8"/><path d="M100.0 892.9 L105.2 893.9 L110.4 896.6 L115.7 897.0 L120.9 893.9 L126.1 898.1 L131.3 896.2 L136.6 894.0 L141.8 894.0" stroke-width="8"/><path d="M35.0 905.6 L40.5 906.4 L46.0 906.1 L51.5 906.4 L57.1 904.3 L62.6 896.5 L68.1 896.4 L73.6 895.3 L79.1 893.5" stroke-width="8"/><path d="M5.0 924.8 L9.7 925.7 L14.5 927.1 L19.2 928.2 L23.9 926.7 L28.6 928.5 L33.4 928.3 L38.1 925.0 L42.8 931.5" stroke-width="7"/><path d="M212.0 911.9 L214.8 913.7 L217.5 913.5 L220.2 913.2 L223.0 914.2 L225.8 910.3 L228.5 910.0 L231.2 911.6 L234.0 913.8" stroke-width="7"/><path d="M130.0 950.6 L137.0 950.8 L144.1 949.4 L151.1 946.6 L158.2 942.8 L165.2 934.0 L172.3 934.5 L179.3 929.1 L186.4 929.3" stroke-width="8"/><path d="M90.0 945.3 L94.9 948.5 L99.8 950.6 L104.7 951.2 L109.6 949.1 L114.5 951.1 L119.4 949.1 L124.3 954.3 L129.2 951.1" stroke-width="7"/><path d="M55.0 958.7 L58.8 959.6 L62.5 960.4 L66.2 958.6 L70.0 957.6 L73.8 956.4 L77.5 956.6 L81.2 956.9 L85.0 957.1" stroke-width="7"/><path d="M180.0 935.3 L183.7 937.2 L187.5 937.8 L191.2 938.3 L194.9 938.7 L198.7 937.0 L202.4 936.6 L206.1 934.4 L209.9 937.4" stroke-width="7"/><path d="M235.0 950.8 L238.1 950.0 L241.1 950.4 L244.2 950.8 L247.3 947.9 L250.3 944.9 L253.4 944.1 L256.4 944.8 L259.5 946.2" stroke-width="7"/><path d="M150.0 905.3 L152.2 905.4 L154.5 907.1 L156.8 906.5 L159.0 905.0 L161.2 902.0 L163.5 905.9 L165.8 902.6 L168.0 905.4" stroke-width="6"/></g>
</svg>
  <div class="hr"></div>
  <div class="item">
    <svg width="30" height="26" viewBox="0 0 30 26"><rect x="0.9" y="0.9" width="26.4" height="23" rx="2.5" fill="none" stroke="#fff" stroke-width="1.7"/><path d="M9.5 1V24M1 9.3H27M1 16.8H27" stroke="#fff" stroke-width="1.7" fill="none"/></svg>
  </div>
<div class="x" style="left:8.00px;top:20.86px;font-size:18.6px;line-height:22px;color:#fff"><span style="letter-spacing:-0.32px">AGENT APPLICANT PORTAL</span></div>
<div class="x" style="left:70.00px;top:83.74px;font-size:12.3px;line-height:16px;color:#fff;font-weight:bold;transform:scaleX(0.8974);transform-origin:0.00px 0;">APPLICATION LIST</div>
</div>
<div id="card"><div class="hd"></div></div>
<svg class="abs" style="left:310px;top:23px" width="33" height="28" viewBox="0 0 33 28"><rect x="2" y="1.8" width="29" height="24.5" rx="2.5" fill="none" stroke="#007bff" stroke-width="2"/><path d="M11.7 2V26M2 10H31M2 18H31" stroke="#007bff" stroke-width="2" fill="none"/></svg>
<div class="btn1"></div><div class="btn2"></div>
<div class="sq"></div>
<div class="secline"></div>
<div class="sel">
<svg class="abs" style="left:37px;top:10px" width="9" height="11" viewBox="0 0 9 11"><path d="M4.5 0.3L8.3 4.4H0.7Z" fill="#343a40"/><path d="M4.5 10.5L8.3 6.2H0.7Z" fill="#343a40"/></svg></div>
<div class="inp"></div>
<div class="thbg"></div>
<div class="thb"></div>
<div class="x" style="left:357.70px;top:19.33px;font-size:30.5px;line-height:36px;color:#212529;"><span style="letter-spacing:-0.084px">Application List</span></div>
<div class="x" style="left:1009.50px;top:120.76px;font-size:16px;line-height:19px;color:#6c757d"><span style="letter-spacing:0.09px">My Applications</span></div>
<div class="x" style="left:1157.00px;top:120.76px;font-size:16px;line-height:19px;color:#fff"><span style="letter-spacing:-0.02px">Agency Applications</span></div>
<div class="x" style="left:331.00px;top:185.75px;font-size:23.8px;line-height:28px;"><span style="letter-spacing:0.022px">Agency Applications</span></div>
<div class="x" style="left:553.90px;top:185.75px;font-size:23.8px;line-height:28px;"><span style="letter-spacing:-1.154px">-</span></div>
<div class="x" style="left:570.20px;top:185.75px;font-size:23.8px;line-height:28px;transform:scaleX(0.9202);transform-origin:0.00px 0;">FACULTY OF BUSINESS AND LAW</div>
<div class="x" style="left:311.40px;top:253.15px;font-size:14px;line-height:21px;"><span style="letter-spacing:-0.61px">Show</span></div>
<div class="x" style="left:412.70px;top:253.15px;font-size:14px;line-height:21px;"><span style="letter-spacing:-0.23px">entries</span></div>
<div class="x" style="left:361.60px;top:254.65px;font-size:14px;line-height:21px;color:#495057">10</div>
<div class="x" style="left:1063.70px;top:255.25px;font-size:14px;line-height:21px;"><span style="letter-spacing:-0.74px">Search:</span></div>
<div style="position:absolute;left:0;top:0;width:1313px;height:970px;overflow:hidden">
<div class="x" style="left:319.00px;top:346.45px;font-size:14px;line-height:21px;color:#495057;font-weight:bold;"><span style="display:inline-block;transform:scaleX(0.9624);transform-origin:0 0">Agent</span></div>
<div class="x" style="left:408.00px;top:325.45px;font-size:14px;line-height:21px;color:#495057;font-weight:bold;"><span style="display:inline-block;transform:scaleX(0.9630);transform-origin:0 0">Person</span><br><span style="display:inline-block;transform:scaleX(0.9550);transform-origin:0 0">ID</span></div>
<div class="x" style="left:491.00px;top:325.45px;font-size:14px;line-height:21px;color:#495057;font-weight:bold;"><span style="display:inline-block;transform:scaleX(0.9634);transform-origin:0 0">Applicant</span><br><span style="display:inline-block;transform:scaleX(0.9550);transform-origin:0 0">ID</span></div>
<div class="x" style="left:592.00px;top:325.45px;font-size:14px;line-height:21px;color:#495057;font-weight:bold;"><span style="display:inline-block;transform:scaleX(0.9634);transform-origin:0 0">Applicant</span><br><span style="display:inline-block;transform:scaleX(0.9623);transform-origin:0 0">Name</span></div>
<div class="x" style="left:694.00px;top:325.45px;font-size:14px;line-height:21px;color:#495057;font-weight:bold;"><span style="display:inline-block;transform:scaleX(0.9615);transform-origin:0 0">Edit</span><br><span style="display:inline-block;transform:scaleX(0.9629);transform-origin:0 0">Access</span></div>
<div class="x" style="left:775.00px;top:325.45px;font-size:14px;line-height:21px;color:#495057;font-weight:bold;"><span style="display:inline-block;transform:scaleX(0.9632);transform-origin:0 0">Creation</span><br><span style="display:inline-block;transform:scaleX(0.9617);transform-origin:0 0">Date</span></div>
<div class="x" style="left:869.00px;top:325.45px;font-size:14px;line-height:21px;color:#495057;font-weight:bold;"><span style="display:inline-block;transform:scaleX(0.9638);transform-origin:0 0">Submission</span><br><span style="display:inline-block;transform:scaleX(0.9617);transform-origin:0 0">Date</span></div>
<div class="x" style="left:982.00px;top:304.45px;font-size:14px;line-height:21px;color:#495057;font-weight:bold;"><span style="display:inline-block;transform:scaleX(1.0255);transform-origin:0 0">App /</span><br><span style="display:inline-block;transform:scaleX(0.9616);transform-origin:0 0">Pref</span><br><span style="display:inline-block;transform:scaleX(0.9631);transform-origin:0 0">Number</span></div>
<div class="x" style="left:1074.00px;top:325.45px;font-size:14px;line-height:21px;color:#495057;font-weight:bold;"><span style="display:inline-block;transform:scaleX(0.9613);transform-origin:0 0">App</span><br><span style="display:inline-block;transform:scaleX(0.9628);transform-origin:0 0">Status</span></div>
<div class="x" style="left:1153.00px;top:325.45px;font-size:14px;line-height:21px;color:#495057;font-weight:bold;"><span style="display:inline-block;transform:scaleX(0.9629);transform-origin:0 0">Course</span><br><span style="display:inline-block;transform:scaleX(0.9628);transform-origin:0 0">Details</span></div>
<div class="x" style="left:1236.00px;top:325.45px;font-size:14px;line-height:21px;color:#495057;font-weight:bold;"><span style="display:inline-block;transform:scaleX(0.9632);transform-origin:0 0">Outcome</span><br><span style="display:inline-block;transform:scaleX(0.9628);transform-origin:0 0">Status</span></div>
<svg class="x" style="left:380.0px;top:305.5px" width="13" height="10" viewBox="0 0 13 10"><path d="M3 9.5V1.2M0.9 3.2L3 0.9L5.1 3.2" stroke="#c7cbcf" stroke-width="1.3" fill="none"/><path d="M9.8 0.5V8.8M7.7 6.8L9.8 9.1L11.9 6.8" stroke="#c7cbcf" stroke-width="1.3" fill="none"/></svg>
<svg class="x" style="left:463.0px;top:327.0px" width="13" height="10" viewBox="0 0 13 10"><path d="M3 9.5V1.2M0.9 3.2L3 0.9L5.1 3.2" stroke="#c7cbcf" stroke-width="1.3" fill="none"/><path d="M9.8 0.5V8.8M7.7 6.8L9.8 9.1L11.9 6.8" stroke="#c7cbcf" stroke-width="1.3" fill="none"/></svg>
<svg class="x" style="left:565.0px;top:327.0px" width="13" height="10" viewBox="0 0 13 10"><path d="M3 9.5V1.2M0.9 3.2L3 0.9L5.1 3.2" stroke="#c7cbcf" stroke-width="1.3" fill="none"/><path d="M9.8 0.5V8.8M7.7 6.8L9.8 9.1L11.9 6.8" stroke="#c7cbcf" stroke-width="1.3" fill="none"/></svg>
<svg class="x" style="left:666.0px;top:327.0px" width="13" height="10" viewBox="0 0 13 10"><path d="M3 9.5V1.2M0.9 3.2L3 0.9L5.1 3.2" stroke="#c7cbcf" stroke-width="1.3" fill="none"/><path d="M9.8 0.5V8.8M7.7 6.8L9.8 9.1L11.9 6.8" stroke="#c7cbcf" stroke-width="1.3" fill="none"/></svg>
<svg class="x" style="left:747.5px;top:327.0px" width="13" height="10" viewBox="0 0 13 10"><path d="M3 9.5V1.2M0.9 3.2L3 0.9L5.1 3.2" stroke="#c7cbcf" stroke-width="1.3" fill="none"/><path d="M9.8 0.5V8.8M7.7 6.8L9.8 9.1L11.9 6.8" stroke="#c7cbcf" stroke-width="1.3" fill="none"/></svg>
<svg class="x" style="left:841.0px;top:327.0px" width="13" height="10" viewBox="0 0 13 10"><path d="M3 9.5V1.2M0.9 3.2L3 0.9L5.1 3.2" stroke="#c7cbcf" stroke-width="1.3" fill="none"/><path d="M9.8 0.5V8.8M7.7 6.8L9.8 9.1L11.9 6.8" stroke="#c7cbcf" stroke-width="1.3" fill="none"/></svg>
<svg class="x" style="left:954.0px;top:327.0px" width="13" height="10" viewBox="0 0 13 10"><path d="M3 9.5V1.2M0.9 3.2L3 0.9L5.1 3.2" stroke="#c7cbcf" stroke-width="1.3" fill="none"/><path d="M9.8 0.5V8.8M7.7 6.8L9.8 9.1L11.9 6.8" stroke="#c7cbcf" stroke-width="1.3" fill="none"/></svg>
<svg class="x" style="left:1046.0px;top:348.0px" width="13" height="10" viewBox="0 0 13 10"><path d="M3 9.5V1.2M0.9 3.2L3 0.9L5.1 3.2" stroke="#c7cbcf" stroke-width="1.3" fill="none"/><path d="M9.8 0.5V8.8M7.7 6.8L9.8 9.1L11.9 6.8" stroke="#495057" stroke-width="1.3" fill="none"/></svg>
<svg class="x" style="left:1125.0px;top:327.0px" width="13" height="10" viewBox="0 0 13 10"><path d="M3 9.5V1.2M0.9 3.2L3 0.9L5.1 3.2" stroke="#c7cbcf" stroke-width="1.3" fill="none"/><path d="M9.8 0.5V8.8M7.7 6.8L9.8 9.1L11.9 6.8" stroke="#c7cbcf" stroke-width="1.3" fill="none"/></svg>
<svg class="x" style="left:1208.0px;top:327.0px" width="13" height="10" viewBox="0 0 13 10"><path d="M3 9.5V1.2M0.9 3.2L3 0.9L5.1 3.2" stroke="#c7cbcf" stroke-width="1.3" fill="none"/><path d="M9.8 0.5V8.8M7.7 6.8L9.8 9.1L11.9 6.8" stroke="#c7cbcf" stroke-width="1.3" fill="none"/></svg>
<svg class="x" style="left:1307.0px;top:327.0px" width="13" height="10" viewBox="0 0 13 10"><path d="M3 9.5V1.2M0.9 3.2L3 0.9L5.1 3.2" stroke="#c7cbcf" stroke-width="1.3" fill="none"/><path d="M9.8 0.5V8.8M7.7 6.8L9.8 9.1L11.9 6.8" stroke="#c7cbcf" stroke-width="1.3" fill="none"/></svg>
</div>
<div class="x" style="left:319.00px;top:385.65px;font-size:14px;line-height:21px;"><span style="display:inline-block;transform:scaleX(0.9054);transform-origin:0 0">MR LUCAS</span><br><span style="display:inline-block;transform:scaleX(0.9000);transform-origin:0 0">ROOLKER</span></div>
<div class="x" style="left:491.00px;top:385.65px;font-size:14px;line-height:21px;"><span style="display:inline-block;transform:scaleX(0.9700);transform-origin:0 0">6171</span></div>
<div class="x" style="left:592.00px;top:385.65px;font-size:14px;line-height:21px;color:#007bff;"><span style="display:inline-block;transform:scaleX(0.9056);transform-origin:0 0">SMITH MR</span><br><span style="display:inline-block;transform:scaleX(0.9000);transform-origin:0 0">DAVE</span></div>
<div class="x" style="left:694.00px;top:385.65px;font-size:14px;line-height:21px;"><span style="display:inline-block;transform:scaleX(0.9306);transform-origin:0 0">Yes</span></div>
<div class="x" style="left:775.00px;top:385.65px;font-size:14px;line-height:21px;"><span style="display:inline-block;transform:scaleX(1.0289);transform-origin:0 0">20/05/2019</span></div>
<div class="x" style="left:869.00px;top:385.65px;font-size:14px;line-height:21px;"><span style="display:inline-block;transform:scaleX(1.0289);transform-origin:0 0">20/05/2019</span></div>
<div class="x" style="left:982.00px;top:385.65px;font-size:14px;line-height:21px;"><span style="display:inline-block;transform:scaleX(1.0182);transform-origin:0 0">7423/1</span></div>
<div class="x" style="left:1153.00px;top:385.65px;font-size:14px;line-height:21px;"><span style="display:inline-block;transform:scaleX(0.9538);transform-origin:0 0">E3001</span></div>
<div class="x" style="left:319.00px;top:444.65px;font-size:14px;line-height:21px;"><span style="display:inline-block;transform:scaleX(0.9052);transform-origin:0 0">MS GRACE</span><br><span style="display:inline-block;transform:scaleX(0.9000);transform-origin:0 0">JOHNSON</span></div>
<div class="x" style="left:491.00px;top:444.65px;font-size:14px;line-height:21px;"><span style="display:inline-block;transform:scaleX(0.9700);transform-origin:0 0">6063</span></div>
<div class="x" style="left:592.00px;top:444.65px;font-size:14px;line-height:21px;color:#007bff;"><span style="display:inline-block;transform:scaleX(0.9041);transform-origin:0 0">JAMES ALLEN</span></div>
<div class="x" style="left:694.00px;top:444.65px;font-size:14px;line-height:21px;"><span style="display:inline-block;transform:scaleX(0.9306);transform-origin:0 0">Yes</span></div>
<div class="x" style="left:775.00px;top:444.65px;font-size:14px;line-height:21px;"><span style="display:inline-block;transform:scaleX(1.0289);transform-origin:0 0">27/03/2019</span></div>
<div class="x" style="left:869.00px;top:444.65px;font-size:14px;line-height:21px;"><span style="display:inline-block;transform:scaleX(1.0289);transform-origin:0 0">27/03/2019</span></div>
<div class="x" style="left:982.00px;top:444.65px;font-size:14px;line-height:21px;"><span style="display:inline-block;transform:scaleX(1.0182);transform-origin:0 0">7194/1</span></div>
<div class="x" style="left:1153.00px;top:444.65px;font-size:14px;line-height:21px;"><span style="display:inline-block;transform:scaleX(0.9318);transform-origin:0 0">EGL001</span></div>
<div class="x" style="left:319.00px;top:503.65px;font-size:14px;line-height:21px;"><span style="display:inline-block;transform:scaleX(0.9052);transform-origin:0 0">MS GRACE</span><br><span style="display:inline-block;transform:scaleX(0.9000);transform-origin:0 0">JOHNSON</span></div>
<div class="x" style="left:491.00px;top:503.65px;font-size:14px;line-height:21px;"><span style="display:inline-block;transform:scaleX(0.9700);transform-origin:0 0">6036</span></div>
<div class="x" style="left:592.00px;top:503.65px;font-size:14px;line-height:21px;color:#007bff;"><span style="display:inline-block;transform:scaleX(0.9000);transform-origin:0 0">JACKIE</span><br><span style="display:inline-block;transform:scaleX(0.9000);transform-origin:0 0">BROWN</span></div>
<div class="x" style="left:694.00px;top:503.65px;font-size:14px;line-height:21px;"><span style="display:inline-block;transform:scaleX(0.9306);transform-origin:0 0">Yes</span></div>
<div class="x" style="left:775.00px;top:503.65px;font-size:14px;line-height:21px;"><span style="display:inline-block;transform:scaleX(1.0289);transform-origin:0 0">27/03/2019</span></div>
<div class="x" style="left:869.00px;top:503.65px;font-size:14px;line-height:21px;"><span style="display:inline-block;transform:scaleX(1.0289);transform-origin:0 0">27/03/2019</span></div>
<div class="x" style="left:982.00px;top:503.65px;font-size:14px;line-height:21px;"><span style="display:inline-block;transform:scaleX(1.0182);transform-origin:0 0">7193/2</span></div>
<div class="x" style="left:1153.00px;top:503.65px;font-size:14px;line-height:21px;"><span style="display:inline-block;transform:scaleX(0.9206);transform-origin:0 0">ELCR13</span></div>
<div class="x" style="left:319.00px;top:562.65px;font-size:14px;line-height:21px;"><span style="display:inline-block;transform:scaleX(0.9054);transform-origin:0 0">MR PETER</span><br><span style="display:inline-block;transform:scaleX(0.9000);transform-origin:0 0">CAVE</span></div>
<div class="x" style="left:491.00px;top:562.65px;font-size:14px;line-height:21px;"><span style="display:inline-block;transform:scaleX(0.9700);transform-origin:0 0">6036</span></div>
<div class="x" style="left:592.00px;top:562.65px;font-size:14px;line-height:21px;color:#007bff;"><span style="display:inline-block;transform:scaleX(0.9000);transform-origin:0 0">PETER</span><br><span style="display:inline-block;transform:scaleX(0.9000);transform-origin:0 0">SHADOW</span></div>
<div class="x" style="left:694.00px;top:562.65px;font-size:14px;line-height:21px;"><span style="display:inline-block;transform:scaleX(0.9306);transform-origin:0 0">Yes</span></div>
<div class="x" style="left:775.00px;top:562.65px;font-size:14px;line-height:21px;"><span style="display:inline-block;transform:scaleX(1.0289);transform-origin:0 0">27/03/2019</span></div>
<div class="x" style="left:869.00px;top:562.65px;font-size:14px;line-height:21px;"><span style="display:inline-block;transform:scaleX(1.0289);transform-origin:0 0">27/03/2019</span></div>
<div class="x" style="left:982.00px;top:562.65px;font-size:14px;line-height:21px;"><span style="display:inline-block;transform:scaleX(1.0182);transform-origin:0 0">7193/1</span></div>
<div class="x" style="left:1153.00px;top:562.65px;font-size:14px;line-height:21px;"><span style="display:inline-block;transform:scaleX(0.9564);transform-origin:0 0">1344A1</span></div>
<div class="x" style="left:319.00px;top:621.65px;font-size:14px;line-height:21px;"><span style="display:inline-block;transform:scaleX(0.9054);transform-origin:0 0">MR LUCAS</span><br><span style="display:inline-block;transform:scaleX(0.9000);transform-origin:0 0">ROOLKER</span></div>
<div class="x" style="left:491.00px;top:621.65px;font-size:14px;line-height:21px;"><span style="display:inline-block;transform:scaleX(0.9700);transform-origin:0 0">6036</span></div>
<div class="x" style="left:592.00px;top:621.65px;font-size:14px;line-height:21px;color:#007bff;"><span style="display:inline-block;transform:scaleX(0.9042);transform-origin:0 0">JOSH DAVIES</span></div>
<div class="x" style="left:694.00px;top:621.65px;font-size:14px;line-height:21px;"><span style="display:inline-block;transform:scaleX(0.9306);transform-origin:0 0">Yes</span></div>
<div class="x" style="left:775.00px;top:621.65px;font-size:14px;line-height:21px;"><span style="display:inline-block;transform:scaleX(1.0289);transform-origin:0 0">27/03/2019</span></div>
<div class="x" style="left:869.00px;top:621.65px;font-size:14px;line-height:21px;"><span style="display:inline-block;transform:scaleX(1.0289);transform-origin:0 0">27/03/2019</span></div>
<div class="x" style="left:982.00px;top:621.65px;font-size:14px;line-height:21px;"><span style="display:inline-block;transform:scaleX(1.0182);transform-origin:0 0">7192/1</span></div>
<div class="x" style="left:1153.00px;top:621.65px;font-size:14px;line-height:21px;"><span style="display:inline-block;transform:scaleX(0.9318);transform-origin:0 0">EGL001</span></div>
<div class="x" style="left:319.00px;top:680.65px;font-size:14px;line-height:21px;"><span style="display:inline-block;transform:scaleX(0.9054);transform-origin:0 0">MR PETER</span><br><span style="display:inline-block;transform:scaleX(0.9000);transform-origin:0 0">CAVE</span></div>
<div class="x" style="left:491.00px;top:680.65px;font-size:14px;line-height:21px;"><span style="display:inline-block;transform:scaleX(0.9700);transform-origin:0 0">6036</span></div>
<div class="x" style="left:592.00px;top:680.65px;font-size:14px;line-height:21px;color:#007bff;"><span style="display:inline-block;transform:scaleX(0.9000);transform-origin:0 0">RICHARD</span><br><span style="display:inline-block;transform:scaleX(0.9000);transform-origin:0 0">SHAMURA</span></div>
<div class="x" style="left:694.00px;top:680.65px;font-size:14px;line-height:21px;"><span style="display:inline-block;transform:scaleX(0.9306);transform-origin:0 0">Yes</span></div>
<div class="x" style="left:775.00px;top:680.65px;font-size:14px;line-height:21px;"><span style="display:inline-block;transform:scaleX(1.0289);transform-origin:0 0">27/03/2019</span></div>
<div class="x" style="left:869.00px;top:680.65px;font-size:14px;line-height:21px;"><span style="display:inline-block;transform:scaleX(1.0289);transform-origin:0 0">27/03/2019</span></div>
<div class="x" style="left:982.00px;top:680.65px;font-size:14px;line-height:21px;"><span style="display:inline-block;transform:scaleX(1.0182);transform-origin:0 0">7191/2</span></div>
<div class="x" style="left:1153.00px;top:680.65px;font-size:14px;line-height:21px;"><span style="display:inline-block;transform:scaleX(0.9318);transform-origin:0 0">EGL005</span></div>
<div class="x" style="left:319.00px;top:739.65px;font-size:14px;line-height:21px;"><span style="display:inline-block;transform:scaleX(0.9000);transform-origin:0 0">MRS</span><br><span style="display:inline-block;transform:scaleX(0.9000);transform-origin:0 0">JENNIFER</span><br><span style="display:inline-block;transform:scaleX(0.9000);transform-origin:0 0">SMITH</span></div>
<div class="x" style="left:491.00px;top:739.65px;font-size:14px;line-height:21px;"><span style="display:inline-block;transform:scaleX(0.9700);transform-origin:0 0">6036</span></div>
<div class="x" style="left:592.00px;top:739.65px;font-size:14px;line-height:21px;color:#007bff;"><span style="display:inline-block;transform:scaleX(0.9000);transform-origin:0 0">PENELOPE</span><br><span style="display:inline-block;transform:scaleX(0.9000);transform-origin:0 0">NGYEN</span></div>
<div class="x" style="left:694.00px;top:739.65px;font-size:14px;line-height:21px;"><span style="display:inline-block;transform:scaleX(0.9306);transform-origin:0 0">Yes</span></div>
<div class="x" style="left:775.00px;top:739.65px;font-size:14px;line-height:21px;"><span style="display:inline-block;transform:scaleX(1.0289);transform-origin:0 0">27/03/2019</span></div>
<div class="x" style="left:869.00px;top:739.65px;font-size:14px;line-height:21px;"><span style="display:inline-block;transform:scaleX(1.0289);transform-origin:0 0">27/03/2019</span></div>
<div class="x" style="left:982.00px;top:739.65px;font-size:14px;line-height:21px;"><span style="display:inline-block;transform:scaleX(1.0182);transform-origin:0 0">7191/1</span></div>
<div class="x" style="left:1153.00px;top:739.65px;font-size:14px;line-height:21px;"><span style="display:inline-block;transform:scaleX(0.9318);transform-origin:0 0">EGL004</span></div>
<div class="x" style="left:319.00px;top:819.65px;font-size:14px;line-height:21px;"><span style="display:inline-block;transform:scaleX(0.9068);transform-origin:0 0">MR JODI</span><br><span style="display:inline-block;transform:scaleX(0.9000);transform-origin:0 0">ANDERSON</span></div>
<div class="x" style="left:491.00px;top:819.65px;font-size:14px;line-height:21px;"><span style="display:inline-block;transform:scaleX(0.9700);transform-origin:0 0">6036</span></div>
<div class="x" style="left:592.00px;top:819.65px;font-size:14px;line-height:21px;color:#007bff;"><span style="display:inline-block;transform:scaleX(0.9043);transform-origin:0 0">JANE HILTON</span></div>
<div class="x" style="left:694.00px;top:819.65px;font-size:14px;line-height:21px;"><span style="display:inline-block;transform:scaleX(0.9306);transform-origin:0 0">Yes</span></div>
<div class="x" style="left:775.00px;top:819.65px;font-size:14px;line-height:21px;"><span style="display:inline-block;transform:scaleX(1.0289);transform-origin:0 0">27/03/2019</span></div>
<div class="x" style="left:869.00px;top:819.65px;font-size:14px;line-height:21px;"><span style="display:inline-block;transform:scaleX(1.0289);transform-origin:0 0">27/03/2019</span></div>
<div class="x" style="left:982.00px;top:819.65px;font-size:14px;line-height:21px;"><span style="display:inline-block;transform:scaleX(1.0182);transform-origin:0 0">7190/1</span></div>
<div class="x" style="left:1153.00px;top:819.65px;font-size:14px;line-height:21px;"><span style="display:inline-block;transform:scaleX(0.9467);transform-origin:0 0">M300</span></div>
<div class="x" style="left:319.00px;top:878.65px;font-size:14px;line-height:21px;"><span style="display:inline-block;transform:scaleX(0.9000);transform-origin:0 0">MR</span><br><span style="display:inline-block;transform:scaleX(0.9000);transform-origin:0 0">WARREN</span><br><span style="display:inline-block;transform:scaleX(0.9000);transform-origin:0 0">ELIS</span></div>
<div class="x" style="left:491.00px;top:878.65px;font-size:14px;line-height:21px;"><span style="display:inline-block;transform:scaleX(0.9700);transform-origin:0 0">6062</span></div>
<div class="x" style="left:592.00px;top:878.65px;font-size:14px;line-height:21px;color:#007bff;"><span style="display:inline-block;transform:scaleX(0.9000);transform-origin:0 0">GREG</span><br><span style="display:inline-block;transform:scaleX(0.9000);transform-origin:0 0">PERKINS</span></div>
<div class="x" style="left:694.00px;top:878.65px;font-size:14px;line-height:21px;"><span style="display:inline-block;transform:scaleX(0.9306);transform-origin:0 0">Yes</span></div>
<div class="x" style="left:775.00px;top:878.65px;font-size:14px;line-height:21px;"><span style="display:inline-block;transform:scaleX(1.0289);transform-origin:0 0">27/03/2019</span></div>
<div class="x" style="left:869.00px;top:878.65px;font-size:14px;line-height:21px;"><span style="display:inline-block;transform:scaleX(1.0289);transform-origin:0 0">27/03/2019</span></div>
<div class="x" style="left:982.00px;top:878.65px;font-size:14px;line-height:21px;"><span style="display:inline-block;transform:scaleX(1.0182);transform-origin:0 0">7189/2</span></div>
<div class="x" style="left:1153.00px;top:878.65px;font-size:14px;line-height:21px;"><span style="display:inline-block;transform:scaleX(0.9318);transform-origin:0 0">EGL001</span></div>
<div class="x" style="left:319.00px;top:958.65px;font-size:14px;line-height:21px;"><span style="display:inline-block;transform:scaleX(0.9000);transform-origin:0 0">MRS</span><br><span style="display:inline-block;transform:scaleX(0.9000);transform-origin:0 0">BROWN</span></div>
<div class="x" style="left:491.00px;top:958.65px;font-size:14px;line-height:21px;"><span style="display:inline-block;transform:scaleX(0.9700);transform-origin:0 0">6062</span></div>
<div class="x" style="left:592.00px;top:958.65px;font-size:14px;line-height:21px;color:#007bff;"><span style="display:inline-block;transform:scaleX(0.9000);transform-origin:0 0">BOB</span><br><span style="display:inline-block;transform:scaleX(0.9000);transform-origin:0 0">SMITH</span></div>
<div class="x" style="left:694.00px;top:958.65px;font-size:14px;line-height:21px;"><span style="display:inline-block;transform:scaleX(0.9306);transform-origin:0 0">Yes</span></div>
<div class="x" style="left:775.00px;top:958.65px;font-size:14px;line-height:21px;"><span style="display:inline-block;transform:scaleX(1.0289);transform-origin:0 0">27/03/2019</span></div>
<div class="x" style="left:869.00px;top:958.65px;font-size:14px;line-height:21px;"><span style="display:inline-block;transform:scaleX(1.0289);transform-origin:0 0">27/03/2019</span></div>
<div class="x" style="left:982.00px;top:958.65px;font-size:14px;line-height:21px;"><span style="display:inline-block;transform:scaleX(1.0182);transform-origin:0 0">7189/1</span></div>
<div class="x" style="left:1153.00px;top:958.65px;font-size:14px;line-height:21px;"><span style="display:inline-block;transform:scaleX(0.9500);transform-origin:0 0">A300</span></div>
<div class="rb" style="top:435px"></div>
<div class="rb" style="top:494px"></div>
<div class="rb" style="top:553px"></div>
<div class="rb" style="top:612px"></div>
<div class="rb" style="top:671px"></div>
<div class="rb" style="top:730px"></div>
<div class="rb" style="top:810px"></div>
<div class="rb" style="top:869px"></div>
<div class="rb" style="top:949px"></div>
<div id="rcard"><div class="hline"></div></div>
<svg class="abs" style="left:1492.9px;top:35.4px" width="75" height="77.4" viewBox="0 0 496 512"><path fill="#70a2db" d="M248 8C111 8 0 119 0 256s111 248 248 248 248-111 248-248S385 8 248 8zm0 96c48.6 0 88 39.4 88 88s-39.4 88-88 88-88-39.4-88-88 39.4-88 88-88zm0 344c-58.7 0-111.3-26.6-146.5-68.2 18.8-35.4 55.6-59.8 98.5-59.8 2.4 0 4.8.4 7.1 1.1 13 4.2 26.6 6.9 40.9 6.9 14.3 0 28-2.7 40.9-6.9 2.3-.7 4.7-1.1 7.1-1.1 42.9 0 79.7 24.4 98.5 59.8C359.3 421.4 306.7 448 248 448z"/></svg>
<div class="x" style="left:1462.00px;top:139.78px;font-size:14.5px;line-height:21px;color:#212529;font-weight:bold;transform:scaleX(0.9012);transform-origin:0.00px 0;">MR RON WALKER</div>
<div class="x" style="left:1454.60px;top:177.45px;font-size:14px;line-height:21px;color:#212529;font-weight:bold;"><span style="letter-spacing:0.051px">Agent ID</span></div>
<div class="x" style="left:1528.00px;top:177.45px;font-size:14px;line-height:21px;color:#212529;transform:scaleX(0.9518);transform-origin:0.00px 0;">98733091</div>
<div id="sb"><div class="thumb"></div>
<svg class="abs" style="left:3px;top:5px" width="10" height="6" viewBox="0 0 10 6"><path d="M0.5 5.5L5 1L9.5 5.5" stroke="#606060" stroke-width="1" fill="none"/></svg>
<svg class="abs" style="left:3px;top:958px" width="10" height="6" viewBox="0 0 10 6"><path d="M0.5 0.5L5 5L9.5 0.5" stroke="#606060" stroke-width="1" fill="none"/></svg>
</div>
</body></html>
